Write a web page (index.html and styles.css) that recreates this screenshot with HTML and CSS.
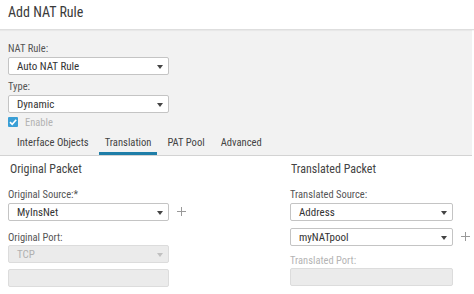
FILE: index.html
```html
<!DOCTYPE html>
<html>
<head>
<meta charset="utf-8">
<link rel="stylesheet" href="styles.css">
</head>
<body>
<div class="dialog">
  <div class="header"><span class="title">Add NAT Rule</span></div>
  <div class="top">
    <div class="label">NAT Rule:</div>
    <div class="select narrow"><span>Auto NAT Rule</span><span class="caret"></span></div>
    <div class="label gap">Type:</div>
    <div class="select narrow"><span>Dynamic</span><span class="caret"></span></div>
    <div class="check-row">
      <span class="checkbox"><svg width="10" height="10" viewBox="0 0 10 10"><path d="M2 5.2 L4.2 7.3 L8.2 2.8" fill="none" stroke="#fff" stroke-width="1.6"/></svg></span>
      <span class="check-label">Enable</span>
    </div>
    <div class="tabs">
      <span class="tab">Interface Objects</span>
      <span class="tab active">Translation</span>
      <span class="tab">PAT Pool</span>
      <span class="tab">Advanced</span>
    </div>
  </div>
  <div class="body">
    <div class="col left">
      <div class="section">Original Packet</div>
      <div class="label">Original Source:*</div>
      <div class="row">
        <div class="select narrow"><span>MyInsNet</span><span class="caret"></span></div>
        <span class="plus"></span>
      </div>
      <div class="label gap-left">Original Port:</div>
      <div class="select narrow disabled"><span>TCP</span><span class="caret"></span></div>
      <div class="input narrow disabled"></div>
    </div>
    <div class="col right">
      <div class="section">Translated Packet</div>
      <div class="label">Translated Source:</div>
      <div class="select wide"><span>Address</span><span class="caret"></span></div>
      <div class="row spaced">
        <div class="select wide"><span>myNATpool</span><span class="caret"></span></div>
        <span class="plus"></span>
      </div>
      <div class="label gap-right dim">Translated Port:</div>
      <div class="input wide disabled flush"></div>
    </div>
  </div>
</div>
</body>
</html>
```
FILE: styles.css
```css
* { box-sizing: border-box; }
html, body { margin: 0; padding: 0; background: #fff; }
body {
  width: 474px;
  height: 294px;
  overflow: hidden;
  font-family: "Roboto Condensed", Roboto, "Liberation Sans", sans-serif;
  color: #333;
}
.header {
  height: 30px;
  padding-left: 8px;
  border-bottom: 1px solid #dedede;
  box-shadow: 0 1px 1px rgba(0,0,0,0.04);
  position: relative;
}
.title {
  display: block;
  font-size: 14px;
  line-height: 24px;
  color: #3a3a3a;
}
.top {
  background: #f2f2f2;
  margin-right: 2px;
  padding: 12px 0 0 8px;
  border-bottom: 1px solid #d3d3d3;
}
.label {
  font-size: 10.5px;
  line-height: 14px;
  color: #555;
  margin-bottom: 1px;
}
.label.gap { margin-top: 5px; }
.label.gap-left { margin-top: 10px; margin-bottom: 0; }
.label.gap-right { margin-top: 8px; margin-bottom: 0; }
.label.dim { color: #b4b4b4; }
.select, .input {
  height: 18px;
  background: #fff;
  border: 1px solid #c4c4c4;
  border-radius: 2px;
  display: flex;
  align-items: center;
  justify-content: space-between;
  padding: 0 5px 0 8px;
  font-size: 11px;
  color: #333;
}
.narrow { width: 161px; }
.wide { width: 163px; }
.caret {
  width: 0;
  height: 0;
  border-left: 3px solid transparent;
  border-right: 3px solid transparent;
  border-top: 4px solid #444;
  margin-top: 1px;
}
.select.disabled, .input.disabled {
  background: #ebebeb;
  border-color: #dcdcdc;
  color: #b0b0b0;
}
.select.disabled .caret { border-top-color: #c0c0c0; }
.input.disabled { margin-top: 6px; }
.input.flush { margin-top: 0; }
.check-row {
  display: flex;
  align-items: center;
  height: 10px;
  margin-top: 4px;
}
.checkbox {
  width: 10px;
  height: 10px;
  background: #3a9fd6;
  border-radius: 1px;
  display: flex;
}
.check-label {
  margin-left: 7px;
  font-size: 10.5px;
  color: #b3b3b3;
}
.tabs {
  display: flex;
  gap: 4px;
  padding-left: 3px;
}
.tab {
  font-size: 10.6px;
  color: #444;
  padding: 6px 6px 0;
  line-height: 19px;
  border-bottom: 3px solid transparent;
}
.tab.active { border-bottom-color: #1f7ea8; }
.body {
  display: flex;
  padding: 5px 0 0 8px;
}
.col { display: flex; flex-direction: column; }
.left { width: 282px; }
.section {
  font-size: 12px;
  line-height: 16px;
  color: #444;
  padding-left: 2px;
  margin-bottom: 11px;
}
.right .section { padding-left: 1px; }
.row { display: flex; align-items: center; }
.row.spaced { margin-top: 7px; }
.plus {
  width: 9px;
  height: 9px;
  margin-left: 8px;
  margin-top: -2px;
  position: relative;
}
.plus::before, .plus::after {
  content: "";
  position: absolute;
  background: #999;
}
.plus::before { left: 4px; top: 0; width: 1px; height: 9px; }
.plus::after { left: 0; top: 4px; width: 9px; height: 1px; }
```
